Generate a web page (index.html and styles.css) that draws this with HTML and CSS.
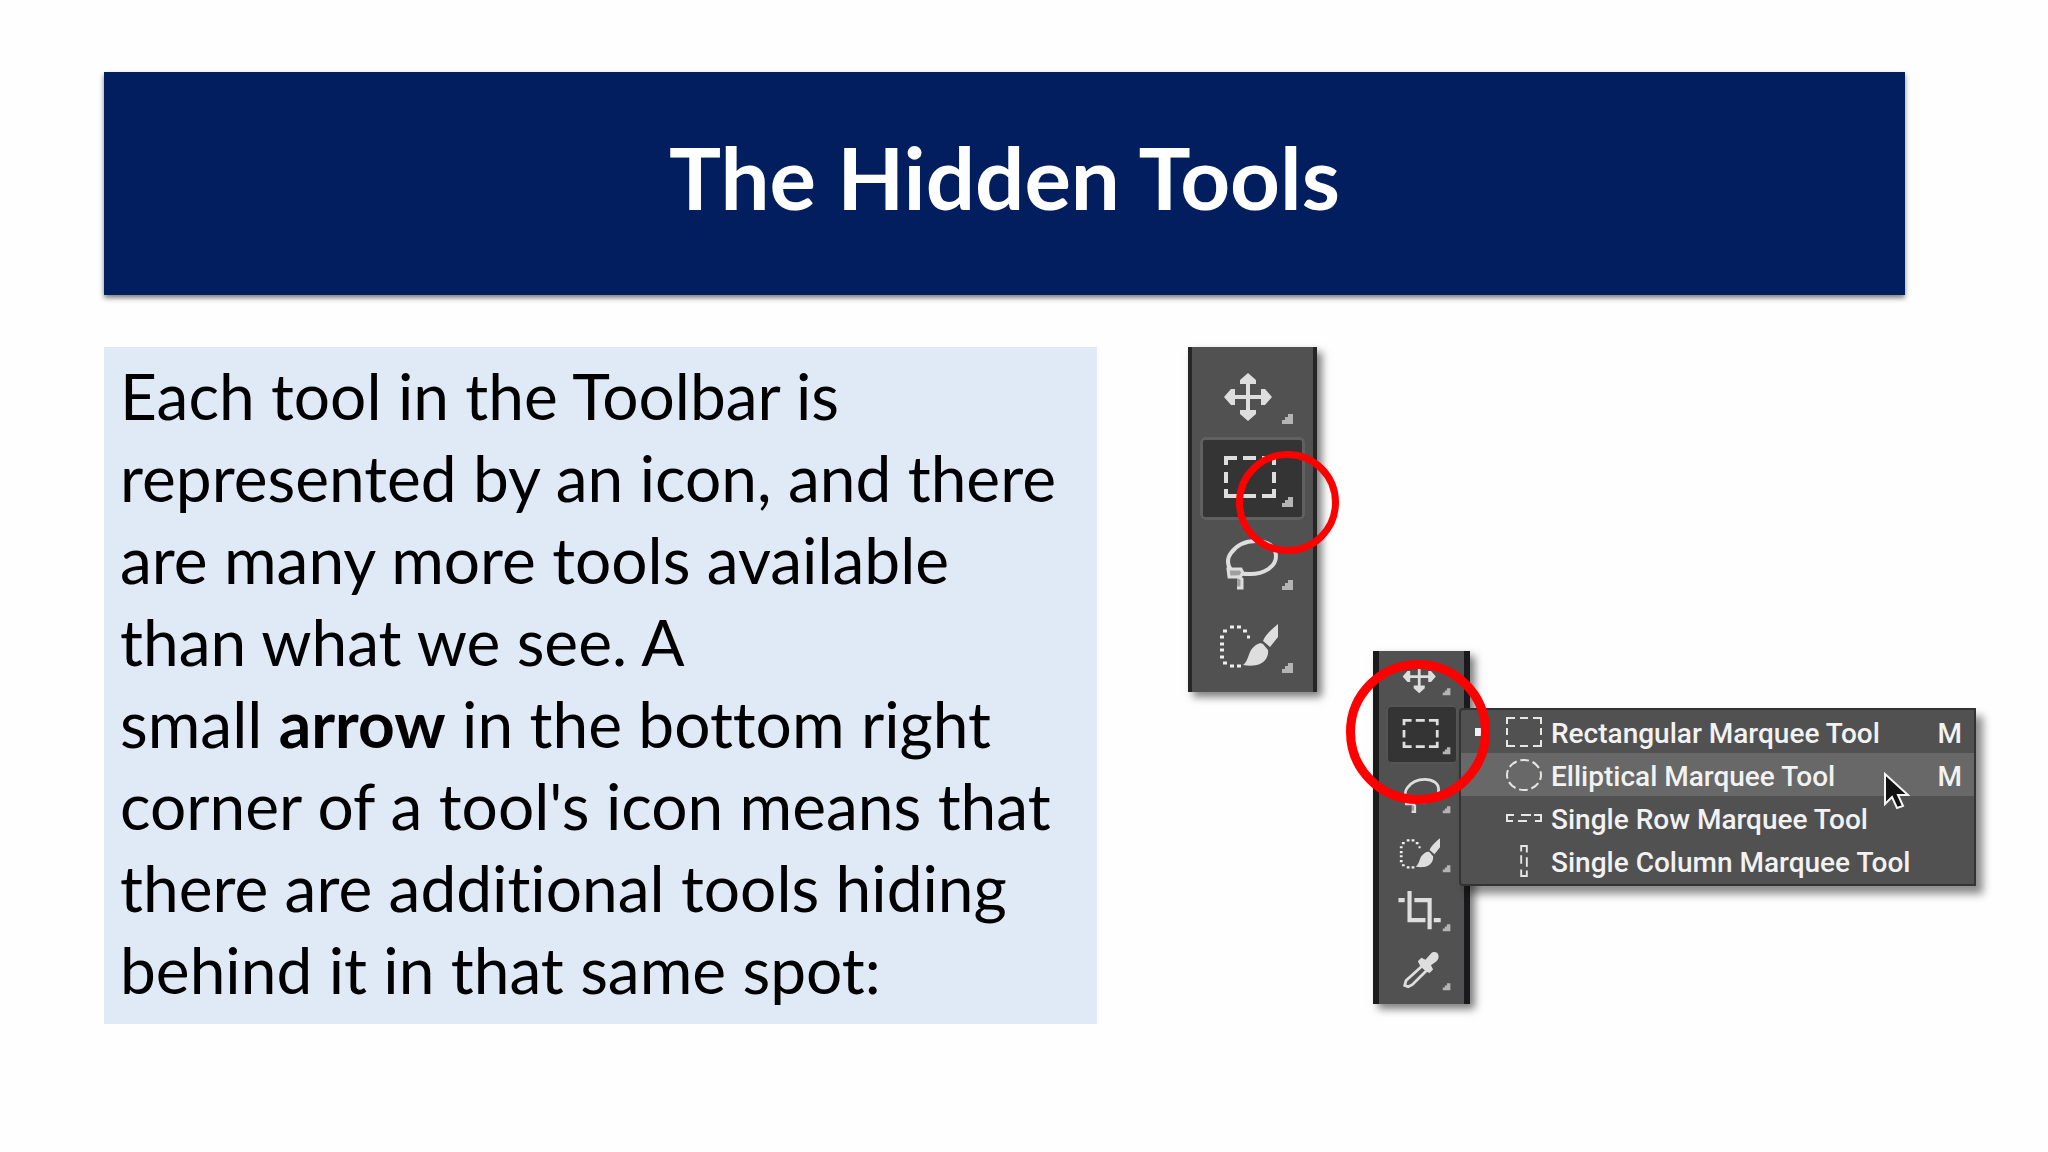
FILE: index.html
```html
<!DOCTYPE html>
<html lang="en">
<head>
    <meta charset="UTF-8">
    <meta name="viewport" content="width=device-width, initial-scale=1.0">
    <title>The Hidden Tools</title>
    <link rel="stylesheet" href="styles.css">
</head>
<body>
    <!-- Tool icons, shared by both toolbars -->
    <svg class="sprite" aria-hidden="true">
        <symbol id="corner" viewBox="0 0 104 83">
            <path d="M82 70v-4h3v-3h3v-3h5v10z" fill="#b4b4b4"/>
        </symbol>
        <symbol id="move" viewBox="0 0 104 83">
            <path d="M48 24v38M29 43h38" stroke="#dedede" stroke-width="4"/>
            <path d="M48 19l8 7v4H40v-4zM48 67l8-7v-4H40v4zM24 43l7-8h4v16h-4zM72 43l-7-8h-4v16h4z" fill="#dedede"/>
        </symbol>
        <symbol id="marquee" viewBox="0 0 104 83">
            <path d="M26 28v-7h11M43 21h13M62 21h12v7M74 35v11M74 52v7H62M56 59H43M37 59H26v-7M26 46V35" fill="none" stroke="#dedede" stroke-width="4"/>
        </symbol>
        <symbol id="lasso" viewBox="0 0 104 83">
            <path d="M31 50c-4-5-4-12 0-17 5-7 14-12 25-12 12 0 20 6 20 15 0 11-12 18-26 18-5 0-9 0-12-1" fill="none" stroke="#dedede" stroke-width="4"/>
            <path d="M28 49h13l2 4-3 4H29zM37 56l5 3v9h-5" fill="#a0a0a0" stroke="#dedede" stroke-width="3"/>
        </symbol>
        <symbol id="quick" viewBox="0 0 104 83">
            <path d="M47 34h3M43 28h4M37 24h4M30 24h4M23 28h4M20 34h4M20 41h4M20 47h4M20 54h4M23 60h4M30 63h4M37 63h4" stroke="#eeeeee" stroke-width="3"/>
            <path d="M43 62c5-4 5-10 8-15 4-5 9-8 12-6l5 6c1 6-3 12-8 14-5 2-11 2-17 1zM78 21v13l-8 10-7-6c2-6 9-12 15-17z" fill="#dedede"/>
        </symbol>
        <symbol id="crop" viewBox="0 0 104 83">
            <path d="M18 25h9M34 12v42h23M41 25h22v42M69 54h10" fill="none" stroke="#dedede" stroke-width="6"/>
        </symbol>
        <symbol id="dropper" viewBox="0 0 104 83">
            <path d="M51 36L29 56l-2 7 5 2 6-3 21-21" fill="none" stroke="#dedede" stroke-width="4"/>
            <path d="M46 28l5-5 6 3 8-9c4-4 11-2 11 4 0 3-1 5-3 7l-8 6 3 6-5 5-5-2-8-7z" fill="#dedede"/>
        </symbol>
    </svg>

    <main class="slide">
        <h1 class="title">The Hidden Tools</h1>

        <div class="content">
            <p class="text">
                Each tool in the Toolbar is<br>
                represented by an icon, and there<br>
                are many more tools available<br>
                than what we see. A<br>
                small <strong>arrow</strong> in the bottom right<br>
                corner of a tool's icon means that<br>
                there are additional tools hiding<br>
                behind it in that same spot:
            </p>

            <div class="figures">
                <div class="figure">
                    <div class="toolbar">
                        <button class="tool" aria-label="Move"><svg><use href="#move"/><use href="#corner"/></svg></button>
                        <button class="tool active" aria-label="Marquee"><svg><use href="#marquee"/><use href="#corner"/></svg></button>
                        <button class="tool" aria-label="Lasso"><svg><use href="#lasso"/><use href="#corner"/></svg></button>
                        <button class="tool" aria-label="Quick selection"><svg><use href="#quick"/><use href="#corner"/></svg></button>
                    </div>
                    <span class="ring"></span>
                </div>

                <div class="figure lower">
                    <div class="toolbar small">
                        <button class="tool cut" aria-label="Move"><svg><use href="#move"/><use href="#corner"/></svg></button>
                        <button class="tool active" aria-label="Marquee"><svg><use href="#marquee"/><use href="#corner"/></svg></button>
                        <button class="tool" aria-label="Lasso"><svg><use href="#lasso"/><use href="#corner"/></svg></button>
                        <button class="tool" aria-label="Quick selection"><svg><use href="#quick"/><use href="#corner"/></svg></button>
                        <button class="tool" aria-label="Crop"><svg><use href="#crop"/><use href="#corner"/></svg></button>
                        <button class="tool" aria-label="Eyedropper"><svg><use href="#dropper"/><use href="#corner"/></svg></button>
                    </div>

                    <div class="menu">
                        <button class="item">
                            <span class="bullet"></span>
                            <svg class="item-icon" viewBox="0 0 36 32"><path d="M1 8V2h8M14 2h8M27 2h8v6M35 12v7M35 24v6h-8M22 30h-8M9 30H1v-6M1 19v-7"/></svg>
                            <span class="name">Rectangular Marquee Tool</span>
                            <span class="key">M</span>
                        </button>
                        <button class="item hover">
                            <span class="bullet"></span>
                            <svg class="item-icon" viewBox="0 0 36 32"><ellipse cx="18" cy="16" rx="17" ry="15" pathLength="80" stroke-dasharray="7 3" stroke-dashoffset="3"/></svg>
                            <span class="name">Elliptical Marquee Tool</span>
                            <span class="key">M</span>
                        </button>
                        <button class="item">
                            <span class="bullet"></span>
                            <svg class="item-icon" viewBox="0 0 36 32"><path d="M8 13H1v6h6M15 13h10M12 19h9M28 13h7v6h-6"/></svg>
                            <span class="name">Single Row Marquee Tool</span>
                        </button>
                        <button class="item">
                            <span class="bullet"></span>
                            <svg class="item-icon" viewBox="0 0 36 34"><path d="M15 7V1h6v7M21 13v10M15 11v9M15 26v7h6v-6"/></svg>
                            <span class="name">Single Column Marquee Tool</span>
                        </button>
                        <svg class="cursor" viewBox="0 0 26 39"><path d="M1 2v30l7-7 5 11 6-2-5-11h10z"/></svg>
                    </div>
                    <span class="ring big"></span>
                </div>
            </div>
        </div>
    </main>
</body>
</html>
```

FILE: styles.css
```css
* {
    box-sizing: border-box;
}

body {
    margin: 0;
    background: #fefefe;
    color: #000;
    font-family: Lato, sans-serif;
    font-variant-ligatures: none;
}

button {
    padding: 0;
    border: none;
    background: none;
    font: inherit;
    color: inherit;
    cursor: pointer;
}

.sprite {
    display: none;
}

.slide {
    padding: 72px 143px 64px 104px;
}

.title {
    margin: 0 0 52px;
    padding: 53px 24px 66px;
    background: #021e5f;
    color: #fff;
    font-size: 87px;
    line-height: 104px;
    font-weight: 700;
    text-align: center;
    box-shadow: 0 3px 5px rgba(0, 0, 0, 0.5);
}

.content {
    display: flex;
    align-items: flex-start;
    gap: 91px;
}

.text {
    flex: 1;
    margin: 0;
    padding: 8px 16px 13px;
    background: #e0eaf6;
    font-size: 64px;
    line-height: 82px;
    white-space: nowrap;
}

.figures {
    display: flex;
    align-items: flex-start;
    gap: 56px;
    width: 717px;
}

.figure {
    position: relative;
}

.lower {
    margin-top: 304px;
}

/* Toolbars */
.toolbar {
    display: flex;
    flex-direction: column;
    padding: 7px 8px 6px;
    border: solid #262626;
    border-width: 0 4px;
    background: #515152;
    box-shadow: 5px 5px 8px rgba(0, 0, 0, 0.5);
}

.tool {
    display: flex;
    align-items: flex-end;
    width: 105px;
    height: 83px;
    border-radius: 5px;
}

.tool svg {
    display: block;
    flex: none;
    width: 104px;
    height: 83px;
}

.tool.active {
    background: #343434;
    box-shadow: inset 0 0 0 3px #606060;
}

.small {
    padding: 0 6px 4px 7px;
    border-color: #1a1a1c;
    border-width: 0 6px;
}

.small .tool {
    width: 72px;
    height: 59px;
}

.small .tool svg {
    width: 72px;
    height: 59px;
}

.small .active {
    box-shadow: inset 0 0 0 2px #555;
}

.small .cut {
    height: 54px;
    overflow: hidden;
}

.ring {
    position: absolute;
    top: 104px;
    left: 48px;
    width: 103px;
    height: 103px;
    border: 7px solid #fe0000;
    border-radius: 50%;
    pointer-events: none;
}

.ring.big {
    top: 9px;
    left: -27px;
    width: 144px;
    height: 144px;
    border-width: 9px;
}

/* Fly-out menu */
.menu {
    position: absolute;
    top: 57px;
    left: 86px;
    width: 517px;
    padding: 0 0 2px;
    border: 2px solid #333;
    border-radius: 4px 0 0 4px;
    background: #515152;
    color: #f2f2f2;
    font-family: Roboto, sans-serif;
    font-size: 28px;
    font-weight: 500;
    line-height: 43px;
    box-shadow: 7px 8px 8px rgba(0, 0, 0, 0.45);
}

.item {
    display: flex;
    align-items: center;
    width: 100%;
    height: 43px;
    padding: 0 12px 0 14px;
    text-align: left;
}

.item.hover {
    background: #686868;
}

.bullet {
    width: 8px;
    height: 8px;
    margin-right: 23px;
}

.item:first-child .bullet {
    background: #f2f2f2;
}

.item-icon {
    width: 36px;
    height: 32px;
    margin-right: 9px;
    fill: none;
    stroke: #e6e6e6;
    stroke-width: 2;
}

.name {
    flex: 1;
    padding-top: 4px;
}

.key {
    padding-top: 4px;
}

.cursor {
    position: absolute;
    top: 62px;
    left: 423px;
    width: 26px;
    height: 39px;
    fill: #111;
    stroke: #f5f5f5;
    stroke-width: 2;
}
```
